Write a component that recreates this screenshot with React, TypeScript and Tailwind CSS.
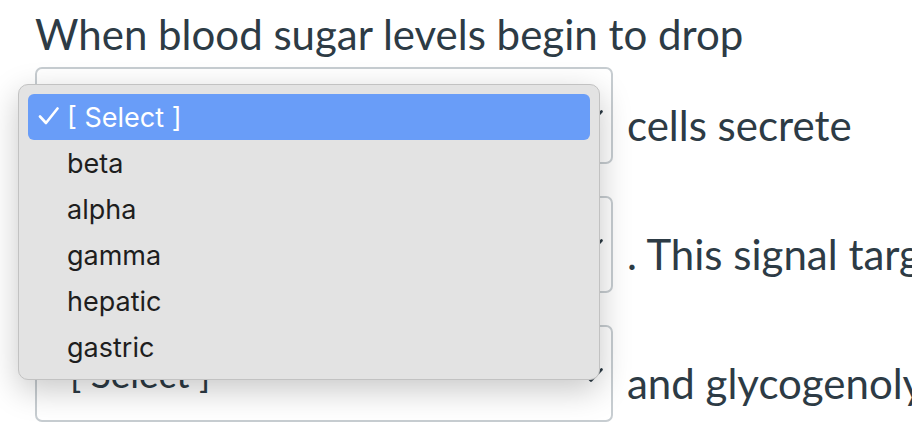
import React from 'react';

const OPTIONS = ['[ Select ]', 'beta', 'alpha', 'gamma', 'hepatic', 'gastric'];

const ROWS = ['cells secrete', '. This signal targets the liver', 'and glycogenolysis'];

function Chevron() {
  return (
    <svg width="24" height="14" viewBox="0 0 24 14" className="shrink-0">
      <polyline points="1.5,1.5 12,12.5 22.5,1.5" fill="none" stroke="#2d3b45" strokeWidth="2.6" strokeLinecap="round" strokeLinejoin="round" />
    </svg>
  );
}

function SelectBox() {
  return (
    <div className="flex h-[97px] w-[578px] shrink-0 items-center justify-between rounded-[7px] border-2 border-[#c7cdd1] bg-white pl-[33px] pr-[8px]">
      <span className="text-[37px] leading-none text-[#2d3b45]">[ Select ]</span>
      <div className="mt-[2px]">
        <Chevron />
      </div>
    </div>
  );
}

export default function App() {
  return (
    <div
      className="relative h-[422px] w-[912px] overflow-hidden bg-white pl-[35px] text-[#2d3b45]"
      style={{ fontFamily: 'Lato, "Open Sans", sans-serif' }}
    >
      <div className="h-[67px] whitespace-nowrap pt-[13px] text-[42px] leading-none">
        When blood sugar levels begin to drop
      </div>

      <div className="flex flex-col gap-[32px]">
        {ROWS.map((label) => (
          <div key={label} className="flex items-start gap-[14px]">
            <SelectBox />
            <span className="mt-[37px] whitespace-nowrap text-[42px] leading-none">{label}</span>
          </div>
        ))}
      </div>

      {/* open native-style dropdown */}
      <div
        className="absolute left-[18px] top-[84px] h-[296px] w-[582px] rounded-[10px] border border-[#c2c2c2] bg-[#e3e3e3] p-[9px] shadow-[0_10px_32px_rgba(0,0,0,0.22)]"
        style={{ fontFamily: 'Inter, "Liberation Sans", sans-serif' }}
      >
        {OPTIONS.map((opt, i) => {
          const selected = i === 0;
          return (
            <div
              key={opt}
              className={`relative flex h-[46px] items-center pl-[39px] text-[27px] leading-none ${
                selected ? 'rounded-[6px] bg-[#699df8] text-white' : 'text-[#1e1e1e]'
              }`}
            >
              {selected && (
                <svg width="22" height="18" viewBox="0 0 22 18" className="absolute left-[10px] top-[13px]">
                  <polyline points="2,9.5 8,16 19.5,1.5" fill="none" stroke="#ffffff" strokeWidth="2.6" strokeLinecap="round" strokeLinejoin="round" />
                </svg>
              )}
              <span>{opt}</span>
            </div>
          );
        })}
      </div>
    </div>
  );
}
